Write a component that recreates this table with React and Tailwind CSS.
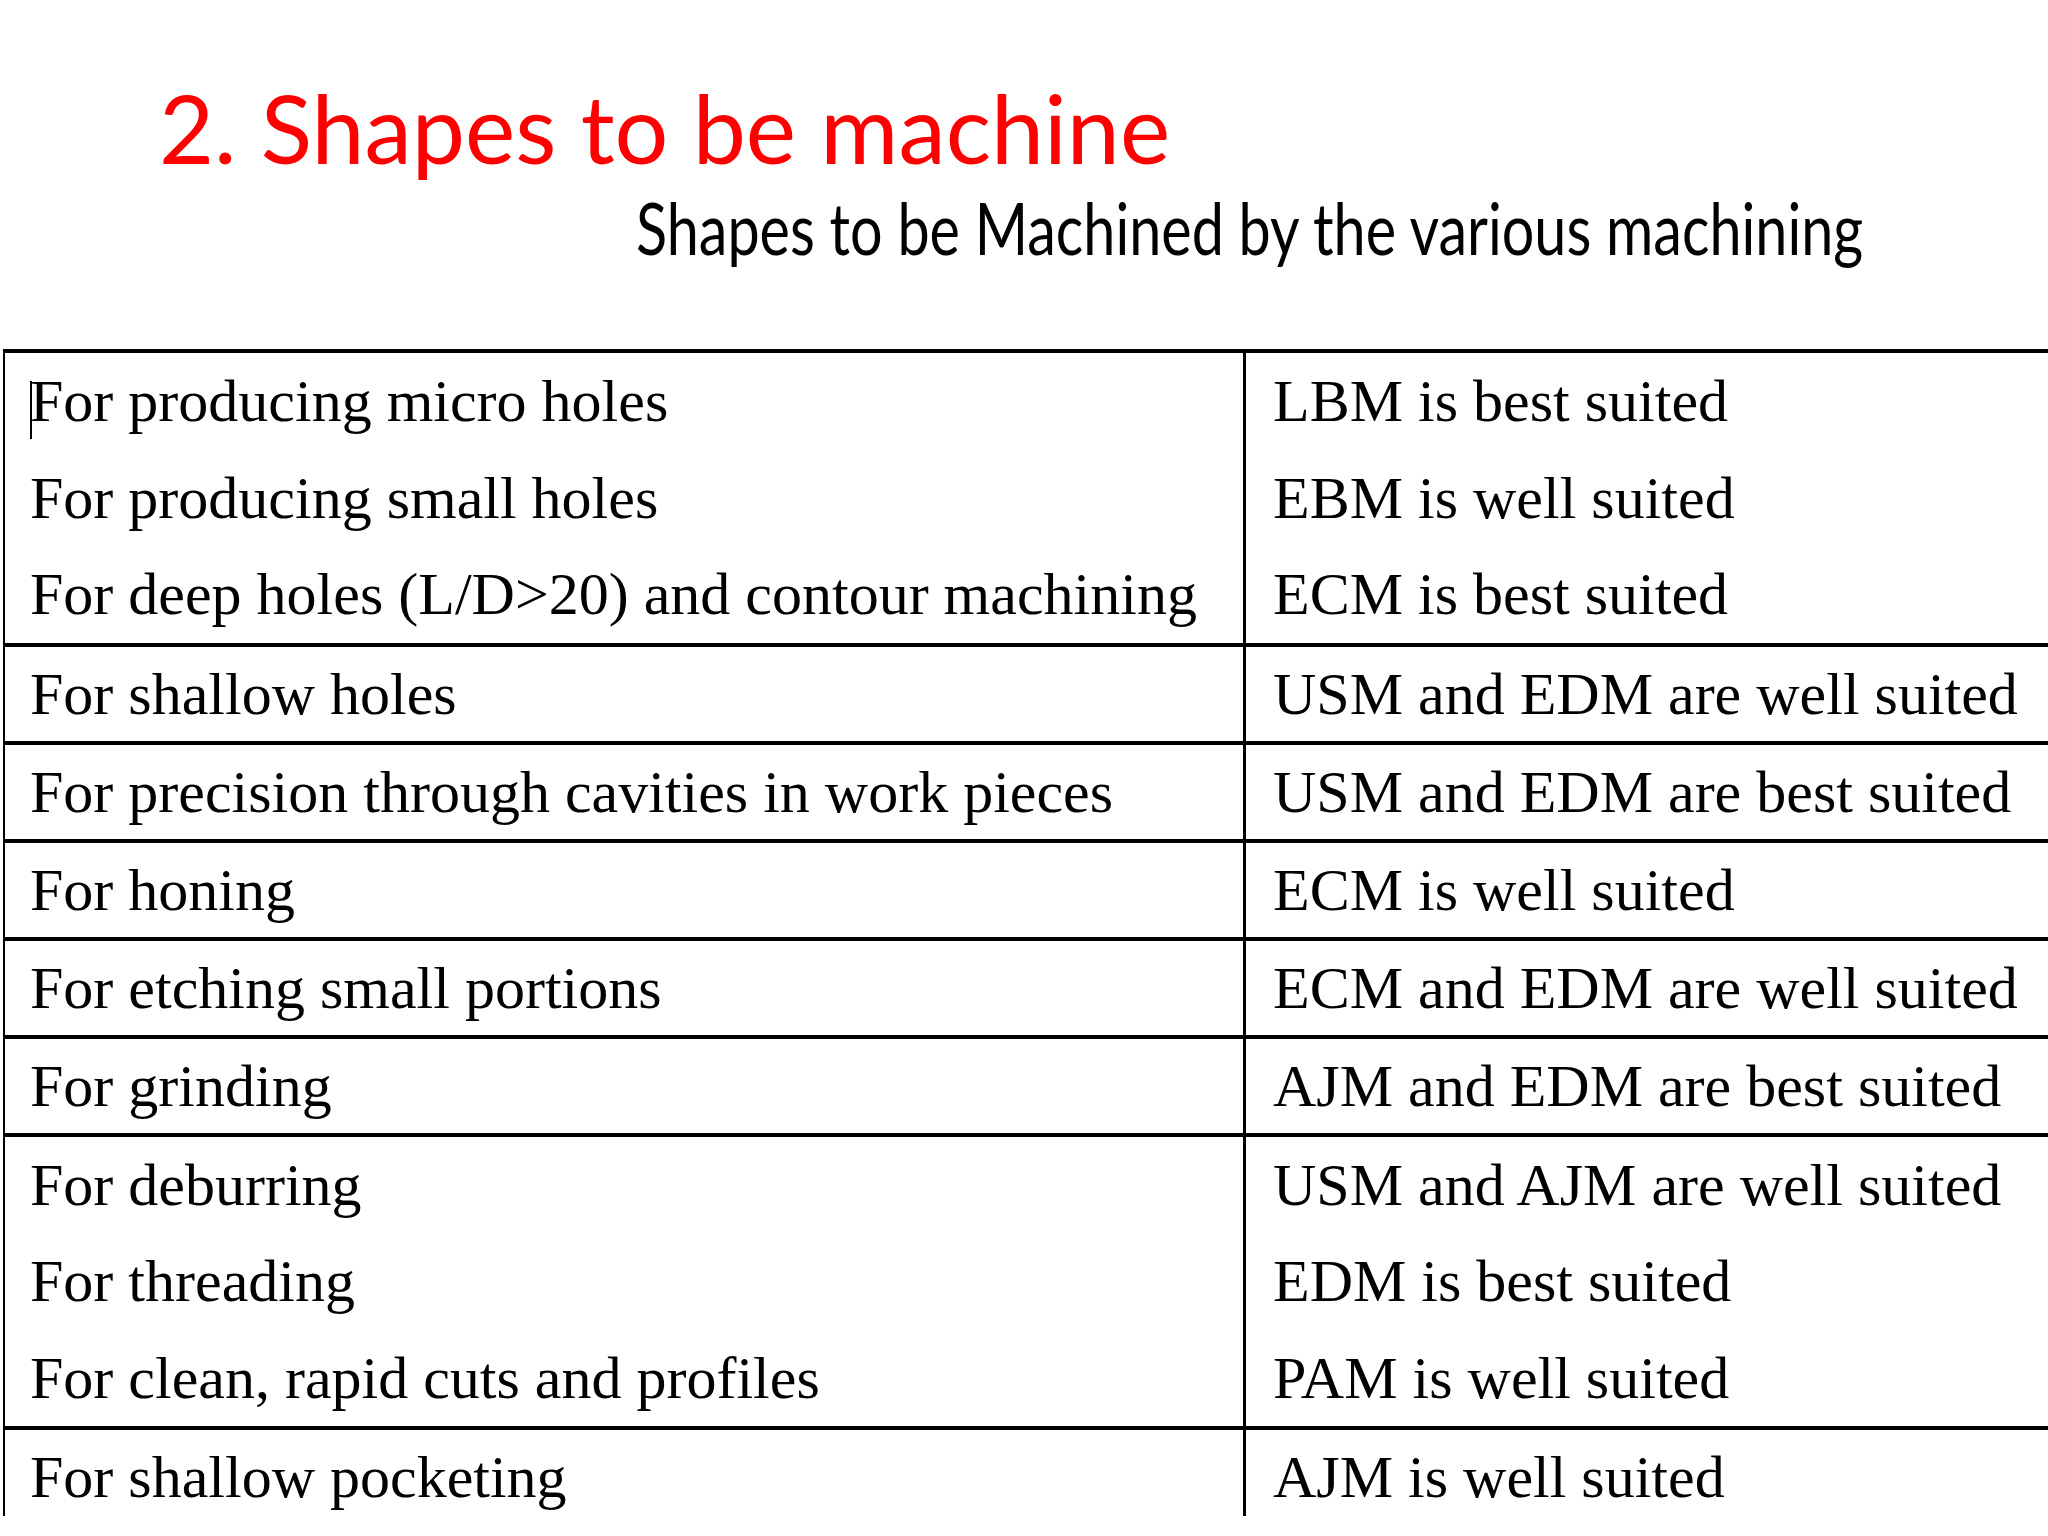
const rows = [
  {
    uses: [
      "For producing micro holes",
      "For producing small holes",
      "For deep holes (L/D>20) and contour machining",
    ],
    methods: ["LBM is best suited", "EBM is well suited", "ECM is best suited"],
    caret: true,
  },
  { uses: ["For shallow holes"], methods: ["USM and EDM are well suited"] },
  {
    uses: ["For precision through cavities in work pieces"],
    methods: ["USM and EDM are best suited"],
  },
  { uses: ["For honing"], methods: ["ECM is well suited"] },
  { uses: ["For etching small portions"], methods: ["ECM and EDM are well suited"] },
  { uses: ["For grinding"], methods: ["AJM and EDM are best suited"] },
  {
    uses: ["For deburring", "For threading", "For clean, rapid cuts and profiles"],
    methods: ["USM and AJM are well suited", "EDM is best suited", "PAM is well suited"],
  },
  { uses: ["For shallow pocketing"], methods: ["AJM is well suited"] },
];

function Cell({ lines, multi, caret, divider }) {
  return (
    <div
      className={
        (divider ? "border-l-[3px] border-black pl-[27px] " : "pl-[25px] ") +
        (multi ? "leading-[96.5px]" : "leading-[94px]")
      }
    >
      {lines.map((line, i) => (
        <div key={i} className="whitespace-nowrap">
          {caret && i === 0 ? (
            <span className="inline-block w-[1.5px] h-[58px] bg-black align-[-18px] -mr-[1.5px]"></span>
          ) : null}
          {line}
        </div>
      ))}
    </div>
  );
}

export default function App() {
  return (
    <div className="w-[2048px] h-[1536px] overflow-hidden bg-white">
      {/* slide heading */}
      <div
        className="pt-[80px] pl-[159px] text-[95px] leading-[95px] text-[#ff0000] whitespace-nowrap"
        style={{ fontFamily: "Lato, 'Open Sans', sans-serif" }}
      >
        2. Shapes to be machine
      </div>
      <div
        className="mt-[17px] pl-[636px] text-[71px] leading-[71px] text-black whitespace-nowrap"
        style={{ fontFamily: "Lato, 'Open Sans', sans-serif" }}
      >
        <div className="inline-block origin-left scale-x-[0.81]">
          Shapes to be Machined by the various machining
        </div>
      </div>

      {/* table, cropped by the slide edge */}
      <div className="mt-[86px] ml-[3px] h-[1167px] overflow-hidden">
        <div
          className="w-[2100px] border-t-4 border-l-2 border-black text-[60px] text-black"
          style={{ fontFamily: "'Liberation Serif', 'Times New Roman', serif" }}
        >
          {rows.map((r, i) => (
            <div
              key={i}
              className="grid grid-cols-[1238px_1fr] border-b-4 border-black"
            >
              <Cell lines={r.uses} multi={r.uses.length > 1} caret={r.caret} />
              <Cell lines={r.methods} multi={r.methods.length > 1} divider />
            </div>
          ))}
        </div>
      </div>
    </div>
  );
}
